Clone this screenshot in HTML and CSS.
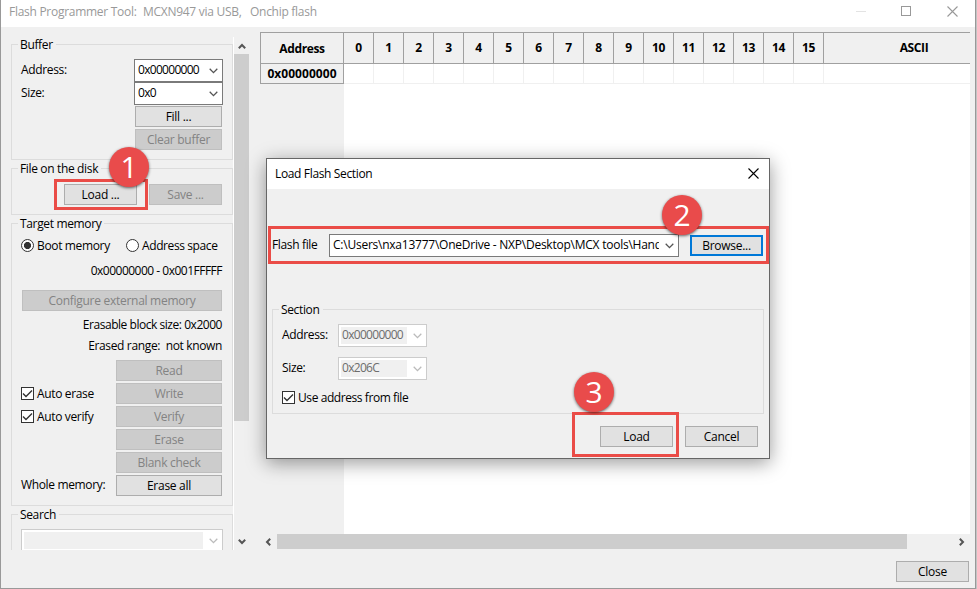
FILE: index.html
```html
<!DOCTYPE html>
<html lang="en">
<head>
    <meta charset="UTF-8">
    <title>Flash Programmer Tool</title>
    <link rel="stylesheet" href="styles.css">
</head>
<body>
<svg class="defs" width="0" height="0">
    <symbol id="chevron" viewBox="0 0 9 6"><path d="M0.7 0.8 L4.5 4.6 L8.3 0.8" fill="none" stroke="currentColor" stroke-width="1.3"/></symbol>
    <symbol id="arrow" viewBox="0 0 8 6"><path d="M0.8 0.8 L4 4 L7.2 0.8" fill="none" stroke="currentColor" stroke-width="2"/></symbol>
    <symbol id="tick" viewBox="1 1 11 11"><path d="M2 6.4 L5 9.4 L11 3.4" fill="none" stroke="currentColor" stroke-width="1.4"/></symbol>
    <symbol id="cross" viewBox="0 0 11 11"><path d="M0.5 0.5 L10.5 10.5 M10.5 0.5 L0.5 10.5" fill="none" stroke="currentColor" stroke-width="1.1"/></symbol>
</svg>

<div class="window">
    <div class="titlebar">
        <div class="title"><span class="t-tool">Flash Programmer Tool:</span><span class="t-dev">MCXN947 via USB,</span><span>Onchip flash</span></div>
        <div class="controls">
            <span class="min"></span>
            <span class="max"></span>
            <svg class="x" width="11" height="11"><use href="#cross"/></svg>
        </div>
    </div>

    <div class="main">
        <div class="side">
            <div class="groups">
                <fieldset class="g-buffer">
                    <legend>Buffer</legend>
                    <div class="row"><label>Address:</label><div class="combo"><span class="num">0x00000000</span><svg width="9" height="6"><use href="#chevron"/></svg></div></div>
                    <div class="row"><label>Size:</label><div class="combo"><span class="num">0x0</span><svg width="9" height="6"><use href="#chevron"/></svg></div></div>
                    <button>Fill ...</button>
                    <button disabled>Clear buffer</button>
                </fieldset>

                <fieldset class="g-file">
                    <legend>File on the disk</legend>
                    <div class="pair">
                        <button>Load ...</button>
                        <button disabled>Save ...</button>
                    </div>
                </fieldset>

                <fieldset class="g-target">
                    <legend>Target memory</legend>
                    <div class="radios">
                        <span class="radio on"></span><label class="boot">Boot memory</label>
                        <span class="radio"></span><label class="space">Address space</label>
                    </div>
                    <div class="info range">0x00000000 - 0x001FFFFF</div>
                    <button class="wide" disabled>Configure external memory</button>
                    <div class="info block">Erasable block size: 0x2000</div>
                    <div class="info erased">Erased range: &nbsp;not known</div>
                    <div class="actions">
                        <span></span><button disabled>Read</button>
                        <div class="check"><svg width="13" height="13"><use href="#tick"/></svg><label>Auto erase</label></div><button disabled>Write</button>
                        <div class="check"><svg width="13" height="13"><use href="#tick"/></svg><label>Auto verify</label></div><button disabled>Verify</button>
                        <span></span><button disabled>Erase</button>
                        <span></span><button disabled>Blank check</button>
                        <label>Whole memory:</label><button>Erase all</button>
                    </div>
                </fieldset>

                <fieldset class="g-search">
                    <legend>Search</legend>
                    <div class="combo off"><span></span><svg width="9" height="6"><use href="#chevron"/></svg></div>
                </fieldset>
            </div>
            <div class="vscroll">
                <svg class="up" width="8" height="6"><use href="#arrow"/></svg>
                <div class="thumb"></div>
                <svg class="down" width="8" height="6"><use href="#arrow"/></svg>
            </div>
        </div>

        <div class="view">
            <div class="grid head">
                <div>Address</div><div>0</div><div>1</div><div>2</div><div>3</div><div>4</div><div>5</div><div>6</div><div>7</div><div>8</div><div>9</div><div>10</div><div>11</div><div>12</div><div>13</div><div>14</div><div>15</div><div class="ascii">ASCII</div>
            </div>
            <div class="grid line">
                <div>0x00000000</div><div></div><div></div><div></div><div></div><div></div><div></div><div></div><div></div><div></div><div></div><div></div><div></div><div></div><div></div><div></div><div></div><div></div>
            </div>
            <div class="blank"></div>
            <div class="hscroll">
                <svg class="left" width="8" height="6"><use href="#arrow"/></svg>
                <div class="thumb"></div>
                <svg class="right" width="8" height="6"><use href="#arrow"/></svg>
            </div>
        </div>
    </div>

    <div class="footer"><button>Close</button></div>
</div>

<div class="dialog">
    <div class="dlg-title"><span>Load Flash Section</span><svg width="11" height="11"><use href="#cross"/></svg></div>
    <div class="file-row">
        <label>Flash file</label>
        <div class="combo"><span class="path">C:\Users\nxa13777\OneDrive - NXP\Desktop\MCX tools\Hand</span><svg width="9" height="6"><use href="#chevron"/></svg></div>
        <button class="focus">Browse...</button>
    </div>
    <fieldset class="g-section">
        <legend>Section</legend>
        <div class="row"><label>Address:</label><div class="combo off"><span class="num">0x00000000</span><svg width="9" height="6"><use href="#chevron"/></svg></div></div>
        <div class="row"><label>Size:</label><div class="combo off"><span class="num">0x206C</span><svg width="9" height="6"><use href="#chevron"/></svg></div></div>
        <div class="check"><svg width="13" height="13"><use href="#tick"/></svg><label>Use address from file</label></div>
    </fieldset>
    <div class="dlg-buttons"><button>Load</button><button>Cancel</button></div>
</div>

<!-- numbered callouts -->
<div class="mark mark1"></div><div class="ball ball1">1</div>
<div class="mark mark2"></div><div class="ball ball2">2</div>
<div class="mark mark3"></div><div class="ball ball3">3</div>
</body>
</html>
```

FILE: styles.css
```css
* {
    box-sizing: border-box;
}
body {
    margin: 0;
    width: 977px;
    height: 589px;
    overflow: hidden;
    background: #c4c4c4;
    font: 12px/17px "Open Sans", "Noto Sans", sans-serif;
    letter-spacing: -0.35px;
    color: #000;
}
.defs {
    position: absolute;
}
.window {
    width: 976px;
    height: 589px;
    background: #f0f0f0;
    border: 1px solid #999;
    border-top: 0;
    display: flex;
    flex-direction: column;
}
svg {
    display: block;
    flex: none;
}

/* title bar */
.titlebar {
    height: 27px;
    background: #fff;
    color: #999;
    display: flex;
    justify-content: space-between;
    padding: 3px 17px 0 8px;
}
.title {
    display: flex;
    letter-spacing: -0.28px;
}
.t-tool {
    width: 134px;
}
.t-dev {
    width: 107px;
}
.controls {
    display: flex;
    padding-top: 3px;
}
.min {
    width: 10px;
    height: 1px;
    margin-top: 5px;
    background: #e3e3e3;
}
.max {
    width: 10px;
    height: 10px;
    border: 1px solid #999;
    margin: 0 36px 0 35px;
}

/* controls */
button {
    display: block;
    width: 73px;
    height: 21px;
    padding: 0;
    border: 1px solid #adadad;
    background: #e1e1e1;
    font: inherit;
    letter-spacing: -0.28px;
    line-height: 19px;
    text-align: center;
    color: #000;
}
button:disabled {
    background: #ccc;
    border-color: #bfbfbf;
    color: #838383;
}
button.focus {
    border: 2px solid #0078d7;
    line-height: 17px;
}
.combo {
    width: 89px;
    height: 23px;
    background: #fff;
    border: 1px solid #7a7a7a;
    display: flex;
    align-items: center;
    justify-content: space-between;
    padding: 0 4px 0 2px;
    color: #555;
}
.combo span {
    flex: 1;
    height: 17px;
    margin-right: 6px;
    line-height: 16px;
    color: #000;
    white-space: nowrap;
    overflow: hidden;
}
.combo .num {
    padding-left: 1px;
    letter-spacing: -0.7px;
}
.combo.off {
    border-color: #ccc;
    color: #bbb;
}
.combo.off span {
    background: #f0f0f0;
    color: #6d6d6d;
}
fieldset {
    margin: 0;
    min-width: 0;
    border: 1px solid #dcdcdc;
    padding: 0 10px 0 6px;
}
legend {
    padding: 0 3px 0 2px;
    height: 17px;
}
.row {
    display: flex;
    justify-content: space-between;
    padding-left: 3px;
}
.row label {
    line-height: 22px;
}
.check {
    display: flex;
    align-items: center;
}
.check svg {
    background: #fff;
    border: 1px solid #333;
    color: #333;
    margin-right: 3px;
}

/* left panel */
.main {
    display: flex;
    height: 523px;
}
.side {
    display: flex;
    width: 259px;
    padding: 9px 0 0 10px;
}
.groups {
    width: 222px;
    height: 514px;
    overflow: hidden;
}
.g-buffer {
    height: 124px;
    padding-top: 6px;
}
.g-buffer .row {
    margin-right: -1px;
}
.g-buffer button {
    width: 87px;
    margin: 1px 0 0 auto;
}
.g-buffer button + button {
    margin-top: 2px;
}
.g-file {
    height: 55px;
    padding-top: 7px;
}
.pair {
    display: flex;
    justify-content: flex-end;
    gap: 12px;
}
.g-target {
    height: 291px;
    padding-top: 5px;
}
.radios {
    display: flex;
    align-items: center;
    height: 17px;
    margin-left: 3px;
}
.radio {
    width: 13px;
    height: 13px;
    border: 1px solid #333;
    border-radius: 50%;
    background: #fff;
}
.radio.on {
    background: radial-gradient(circle, #333 3.2px, #fff 3.9px);
}
.radios label {
    margin-left: 3px;
}
.radios .space {
    white-space: nowrap;
    letter-spacing: -0.4px;
}
.boot {
    width: 89px;
}
.info {
    text-align: right;
    white-space: nowrap;
    height: 17px;
}
.range {
    margin-top: 8px;
    letter-spacing: -0.5px;
}
.wide {
    width: 200px;
    margin: 11px 0 0 auto;
}
.block {
    margin-top: 5px;
    letter-spacing: -0.46px;
}
.erased {
    margin-top: 4px;
}
.actions {
    display: grid;
    grid-template-columns: 95px 106px;
    row-gap: 2px;
    margin: 6px 0 0 3px;
    width: 201px;
}
.actions button {
    width: 106px;
}
.actions > label {
    line-height: 19px;
    white-space: nowrap;
}
.g-search {
    height: 60px;
    padding-top: 6px;
}
.g-search .combo {
    width: 202px;
    margin-left: 3px;
}
.vscroll {
    width: 17px;
    height: 513px;
    margin-top: 1px;
    border-left: 1px solid #fff;
    display: flex;
    flex-direction: column;
    align-items: center;
    color: #555;
}
.up {
    transform: rotate(180deg);
    margin: 6px 1px 5px 0;
}
.vscroll .thumb {
    width: 15px;
    height: 367px;
    margin-right: 1px;
    background: #cdcdcd;
}
.down {
    margin: 118px 1px 0 0;
}

/* memory view */
.view {
    width: 710px;
    padding-top: 5px;
}
.grid {
    display: grid;
    grid-template-columns: 84px repeat(16, 30px) 146px;
    text-align: center;
    font-weight: bold;
}
.head {
    height: 32px;
    border-top: 1px solid #a0a0a0;
    border-bottom: 1px solid #a0a0a0;
    line-height: 29px;
}
.head div {
    border-right: 1px solid #a0a0a0;
}
.head div:first-child {
    border-left: 1px solid #a0a0a0;
    line-height: 32px;
}
.head .ascii {
    border-right: 0;
    padding-left: 34px;
}
.line {
    height: 19px;
}
.line div {
    background: #fff;
    border-right: 1px solid #f0f0f0;
    border-bottom: 1px solid #f0f0f0;
}
.line div:first-child {
    background: #f0f0f0;
    border: 1px solid #a0a0a0;
    border-top: 0;
    line-height: 19px;
    letter-spacing: 0.05px;
}
.line div:last-child {
    border-right: 0;
}
.blank {
    height: 451px;
    margin-left: 84px;
    background: #fff;
}
.hscroll {
    height: 15px;
    display: flex;
    align-items: center;
    color: #555;
}
.left {
    transform: rotate(90deg);
    margin: 0 5px 0 4px;
}
.right {
    transform: rotate(-90deg);
    margin-left: 51px;
}
.hscroll .thumb {
    width: 630px;
    height: 15px;
    background: #cdcdcd;
}
.footer {
    padding: 11px 6px 0 0;
}
.footer button {
    margin-left: auto;
}

/* dialog */
.dialog {
    position: absolute;
    left: 266px;
    top: 158px;
    width: 504px;
    height: 301px;
    background: #f0f0f0;
    border: 1px solid #666;
    box-shadow: 0 4px 18px rgba(0, 0, 0, 0.4);
}
.dlg-title {
    height: 30px;
    background: #fff;
    display: flex;
    align-items: center;
    justify-content: space-between;
    padding: 0 10px 2px 8px;
}
.file-row {
    display: flex;
    padding: 45px 0 0 5px;
}
.file-row label {
    width: 57px;
    line-height: 22px;
}
.file-row .combo {
    width: 350px;
}
.file-row .path {
    padding-left: 1px;
    letter-spacing: -0.24px;
}
.file-row button {
    margin: 1px 0 0 11px;
}
.g-section {
    width: 492px;
    height: 113px;
    margin: 44px 0 0 5px;
    padding-top: 6px;
}
.g-section .row {
    justify-content: flex-start;
    margin-bottom: 10px;
}
.g-section .row label {
    width: 56px;
}
.g-section .check {
    padding-left: 3px;
    margin-top: -1px;
    letter-spacing: -0.42px;
}
.dlg-buttons {
    display: flex;
    justify-content: flex-end;
    gap: 12px;
    padding: 12px 11px 0 0;
}

/* callouts */
.mark {
    position: absolute;
    border: 3px solid #ea4c47;
}
.mark1 {
    left: 54px;
    top: 179px;
    width: 94px;
    height: 31px;
}
.mark2 {
    left: 268px;
    top: 226px;
    width: 501px;
    height: 38px;
}
.mark3 {
    left: 572px;
    top: 412px;
    width: 107px;
    height: 45px;
}
.ball {
    position: absolute;
    width: 40px;
    height: 40px;
    border-radius: 50%;
    background: #e94b4b;
    box-shadow: 0 1px 3px rgba(0, 0, 0, 0.6);
    color: #fff;
    font-size: 30px;
    line-height: 39px;
    letter-spacing: 0;
    text-align: center;
}
.ball1 {
    left: 109px;
    top: 147px;
}
.ball2 {
    left: 662px;
    top: 195px;
}
.ball3 {
    left: 574px;
    top: 372px;
}
```
